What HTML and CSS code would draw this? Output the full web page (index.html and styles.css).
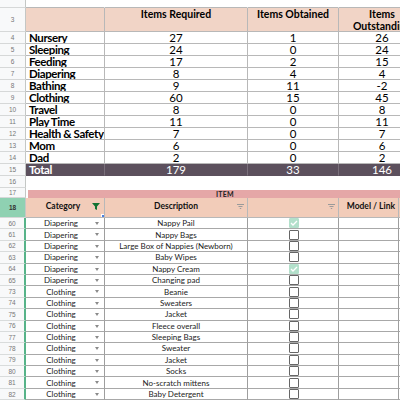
FILE: index.html
```html
<!DOCTYPE html>
<html>
<head>
<meta charset="utf-8">
<link rel="stylesheet" href="styles.css">
</head>
<body>
<div class="sheet">
  <div class="row r2"><div class="rh">2</div><div class="c a"></div><div class="c b title">CHECKLIST</div><div class="c c3"></div><div class="c d2"></div></div>
  <div class="row r3"><div class="rh">3</div><div class="c a hd"></div><div class="c b hd">Items Required</div><div class="c c3 hd">Items Obtained</div><div class="c d2 hd">Items<br>Outstanding</div></div>
  <div class="row ru"><div class="rh">4</div><div class="c a lbl">Nursery</div><div class="c b num">27</div><div class="c c3 num">1</div><div class="c d2 num">26</div></div>
  <div class="row ru"><div class="rh">5</div><div class="c a lbl">Sleeping</div><div class="c b num">24</div><div class="c c3 num">0</div><div class="c d2 num">24</div></div>
  <div class="row ru"><div class="rh">6</div><div class="c a lbl">Feeding</div><div class="c b num">17</div><div class="c c3 num">2</div><div class="c d2 num">15</div></div>
  <div class="row ru"><div class="rh">7</div><div class="c a lbl">Diapering</div><div class="c b num">8</div><div class="c c3 num">4</div><div class="c d2 num">4</div></div>
  <div class="row ru"><div class="rh">8</div><div class="c a lbl">Bathing</div><div class="c b num">9</div><div class="c c3 num">11</div><div class="c d2 num">-2</div></div>
  <div class="row ru"><div class="rh">9</div><div class="c a lbl">Clothing</div><div class="c b num">60</div><div class="c c3 num">15</div><div class="c d2 num">45</div></div>
  <div class="row ru"><div class="rh">10</div><div class="c a lbl">Travel</div><div class="c b num">8</div><div class="c c3 num">0</div><div class="c d2 num">8</div></div>
  <div class="row ru"><div class="rh">11</div><div class="c a lbl">Play Time</div><div class="c b num">11</div><div class="c c3 num">0</div><div class="c d2 num">11</div></div>
  <div class="row ru"><div class="rh">12</div><div class="c a lbl">Health &amp; Safety</div><div class="c b num">7</div><div class="c c3 num">0</div><div class="c d2 num">7</div></div>
  <div class="row ru"><div class="rh">13</div><div class="c a lbl">Mom</div><div class="c b num">6</div><div class="c c3 num">0</div><div class="c d2 num">6</div></div>
  <div class="row ru"><div class="rh">14</div><div class="c a lbl">Dad</div><div class="c b num">2</div><div class="c c3 num">0</div><div class="c d2 num">2</div></div>
  <div class="row ru total"><div class="rh">15</div><div class="c a lbl">Total</div><div class="c b num">179</div><div class="c c3 num">33</div><div class="c d2 num">146</div></div>
  <div class="row r16"><div class="rh">16</div><div class="blank"></div></div>
  <div class="row r17"><div class="rh">17</div><div class="item"><span>ITEM</span></div></div>
  <div class="row r18">
    <div class="rh sel">18</div>
    <div class="c a hd2">Category
      <svg class="funnel" width="8" height="7" viewBox="0 0 8 7"><path d="M0 0H8L5 3.5V7L3 6V3.5Z" fill="#137333"/></svg>
      <span class="selbox"></span>
    </div>
    <div class="c b hd2">Description<svg class="fbtn" width="7" height="5" viewBox="0 0 7 5"><path d="M0 0.5H7M1.5 2.5H5.5M2.8 4.5H4.2" stroke="#9a9a9a" stroke-width="1"/></svg></div>
    <div class="c c3 hd2"><svg class="fbtn" width="7" height="5" viewBox="0 0 7 5"><path d="M0 0.5H7M1.5 2.5H5.5M2.8 4.5H4.2" stroke="#9a9a9a" stroke-width="1"/></svg></div>
    <div class="c d hd2">Model / Link</div>
    <div class="c e hd2"></div>
  </div>
  <div class="row rl"><div class="rh g">60</div><div class="c a cat">Diapering<i class="dd"></i></div><div class="c b desc">Nappy Pail</div><div class="c c3 chk"><span class="box on"><svg width="8" height="6" viewBox="0 0 8 6"><path d="M1 3L3 5L7 1" stroke="#fff" stroke-width="1.3" fill="none"/></svg></span></div><div class="c d"></div><div class="c e"></div></div>
  <div class="row rl"><div class="rh g">61</div><div class="c a cat">Diapering<i class="dd"></i></div><div class="c b desc">Nappy Bags</div><div class="c c3 chk"><span class="box"></span></div><div class="c d"></div><div class="c e"></div></div>
  <div class="row rl"><div class="rh g">62</div><div class="c a cat">Diapering<i class="dd"></i></div><div class="c b desc">Large Box of Nappies (Newborn)</div><div class="c c3 chk"><span class="box"></span></div><div class="c d"></div><div class="c e"></div></div>
  <div class="row rl"><div class="rh g">63</div><div class="c a cat">Diapering<i class="dd"></i></div><div class="c b desc">Baby Wipes</div><div class="c c3 chk"><span class="box"></span></div><div class="c d"></div><div class="c e"></div></div>
  <div class="row rl"><div class="rh g">64</div><div class="c a cat">Diapering<i class="dd"></i></div><div class="c b desc">Nappy Cream</div><div class="c c3 chk"><span class="box on"><svg width="8" height="6" viewBox="0 0 8 6"><path d="M1 3L3 5L7 1" stroke="#fff" stroke-width="1.3" fill="none"/></svg></span></div><div class="c d"></div><div class="c e"></div></div>
  <div class="row rl"><div class="rh g">65</div><div class="c a cat">Diapering<i class="dd"></i></div><div class="c b desc">Changing pad</div><div class="c c3 chk"><span class="box"></span></div><div class="c d"></div><div class="c e"></div></div>
  <div class="row rl"><div class="rh g">73</div><div class="c a cat">Clothing<i class="dd"></i></div><div class="c b desc">Beanie</div><div class="c c3 chk"><span class="box"></span></div><div class="c d"></div><div class="c e"></div></div>
  <div class="row rl"><div class="rh g">74</div><div class="c a cat">Clothing<i class="dd"></i></div><div class="c b desc">Sweaters</div><div class="c c3 chk"><span class="box"></span></div><div class="c d"></div><div class="c e"></div></div>
  <div class="row rl"><div class="rh g">75</div><div class="c a cat">Clothing<i class="dd"></i></div><div class="c b desc">Jacket</div><div class="c c3 chk"><span class="box"></span></div><div class="c d"></div><div class="c e"></div></div>
  <div class="row rl"><div class="rh g">76</div><div class="c a cat">Clothing<i class="dd"></i></div><div class="c b desc">Fleece overall</div><div class="c c3 chk"><span class="box"></span></div><div class="c d"></div><div class="c e"></div></div>
  <div class="row rl"><div class="rh g">77</div><div class="c a cat">Clothing<i class="dd"></i></div><div class="c b desc">Sleeping Bags</div><div class="c c3 chk"><span class="box"></span></div><div class="c d"></div><div class="c e"></div></div>
  <div class="row rl"><div class="rh g">78</div><div class="c a cat">Clothing<i class="dd"></i></div><div class="c b desc">Sweater</div><div class="c c3 chk"><span class="box"></span></div><div class="c d"></div><div class="c e"></div></div>
  <div class="row rl"><div class="rh g">79</div><div class="c a cat">Clothing<i class="dd"></i></div><div class="c b desc">Jacket</div><div class="c c3 chk"><span class="box"></span></div><div class="c d"></div><div class="c e"></div></div>
  <div class="row rl"><div class="rh g">80</div><div class="c a cat">Clothing<i class="dd"></i></div><div class="c b desc">Socks</div><div class="c c3 chk"><span class="box"></span></div><div class="c d"></div><div class="c e"></div></div>
  <div class="row rl"><div class="rh g">81</div><div class="c a cat">Clothing<i class="dd"></i></div><div class="c b desc">No-scratch mittens</div><div class="c c3 chk"><span class="box"></span></div><div class="c d"></div><div class="c e"></div></div>
  <div class="row rl"><div class="rh g">82</div><div class="c a cat">Clothing<i class="dd"></i></div><div class="c b desc">Baby Detergent</div><div class="c c3 chk"><span class="box"></span></div><div class="c d"></div><div class="c e"></div></div>
</div>
</body>
</html>
```

FILE: styles.css
```css
* { box-sizing: border-box; }
html, body { margin: 0; padding: 0; overflow: hidden; background: #fff; }
body { width: 400px; height: 400px; font-family: Lato, "Open Sans", sans-serif; color: #000; }
.sheet { width: 520px; margin-top: -16px; }
.row { display: grid; grid-template-columns: 26px 79px 143px 91px 60px 27px 94px; }
.rh { background: #f8f9fa; color: #777; font-family: "Liberation Sans", sans-serif; font-size: 6.5px; display: flex; align-items: center; justify-content: center; border-right: 1px solid #c4c7c5; border-bottom: 1px solid #d6d8d8; }
.c { border-right: 1px solid #b8b8b8; border-bottom: 1px solid #b8b8b8; overflow: hidden; white-space: nowrap; }
.d2 { grid-column: span 2; }
.e { grid-column: span 2; }

.r2 { height: 24px; }
.r2 .c { border-right-color: #fff; }
.title { color: #888; font-size: 10px; font-weight: 700; letter-spacing: 0.5px; padding: 7px 0 0 5px; line-height: 10px; }

.r3 { height: 24px; }
.hd { background: #f1d4c6; font-weight: 700; font-size: 10.5px; text-align: center; padding-top: 1px; line-height: 11.5px; }

.ru { height: 12px; }
.ru .c { display: flex; align-items: center; font-size: 11.5px; line-height: 12px; }
.lbl { font-weight: 700; padding-left: 3px; letter-spacing: -0.4px; }
.num { justify-content: center; }
.total .c { background: #5c505d; color: #fff; border-color: #5c505d; }
.total .a, .total .b, .total .c3 { border-right-color: #7a707b; }

.r16 { height: 12px; }
.blank { grid-column: span 6; border-bottom: 1px solid #fff; }
.r17 { height: 10px; }
.item { grid-column: span 6; background: #e5a7a7; border-top: 2px solid #fff; margin-left: 2px; font-size: 7px; font-weight: 700; color: #222; padding-left: 188px; line-height: 8px; }
.item span { letter-spacing: 0.2px; }

.r18 { height: 20px; }
.rh.sel { background: #8fd1b2; color: #333; font-weight: 700; }
.hd2 { background: #f2ccb9; font-weight: 700; font-size: 8.5px; text-align: center; padding-top: 3px; line-height: 10px; position: relative; color: #111; }
.hd2.a { padding-right: 4px; }
.funnel { position: absolute; right: 4px; top: 5px; }
.fbtn { position: absolute; right: 3px; top: 6px; }
.hd2.d { text-align: right; padding-right: 3px; }
.selbox { position: absolute; left: -1px; top: -1px; right: -1px; bottom: -1px; border: 1.5px solid #4a7fe0; pointer-events: none; }
.selbox::after { content: ""; position: absolute; right: -3px; bottom: -3px; width: 4px; height: 4px; background: #4a7fe0; border: 1px solid #fff; }

.rl { height: 11.4px; }
.rh.g { border-right: 2px solid #57b389; border-bottom-color: #d9dcdc; }
.rl .c { display: flex; align-items: center; font-size: 8px; line-height: 10px; color: #222; border-right-color: #9e9e9e; border-bottom-color: #a8a8a8; }
.cat { justify-content: center; padding-right: 8px; position: relative; }
.dd { position: absolute; right: 5px; top: 4px; width: 0; height: 0; border-left: 2.5px solid transparent; border-right: 2.5px solid transparent; border-top: 3px solid #8a8a8a; }
.desc { justify-content: center; }
.chk { justify-content: center; }
.box { width: 10px; height: 10px; border: 1.3px solid #666; border-radius: 1px; display: flex; align-items: center; justify-content: center; margin-left: 1px; }
.box.on { background: #b3e0cb; border-color: #b3e0cb; }
```
